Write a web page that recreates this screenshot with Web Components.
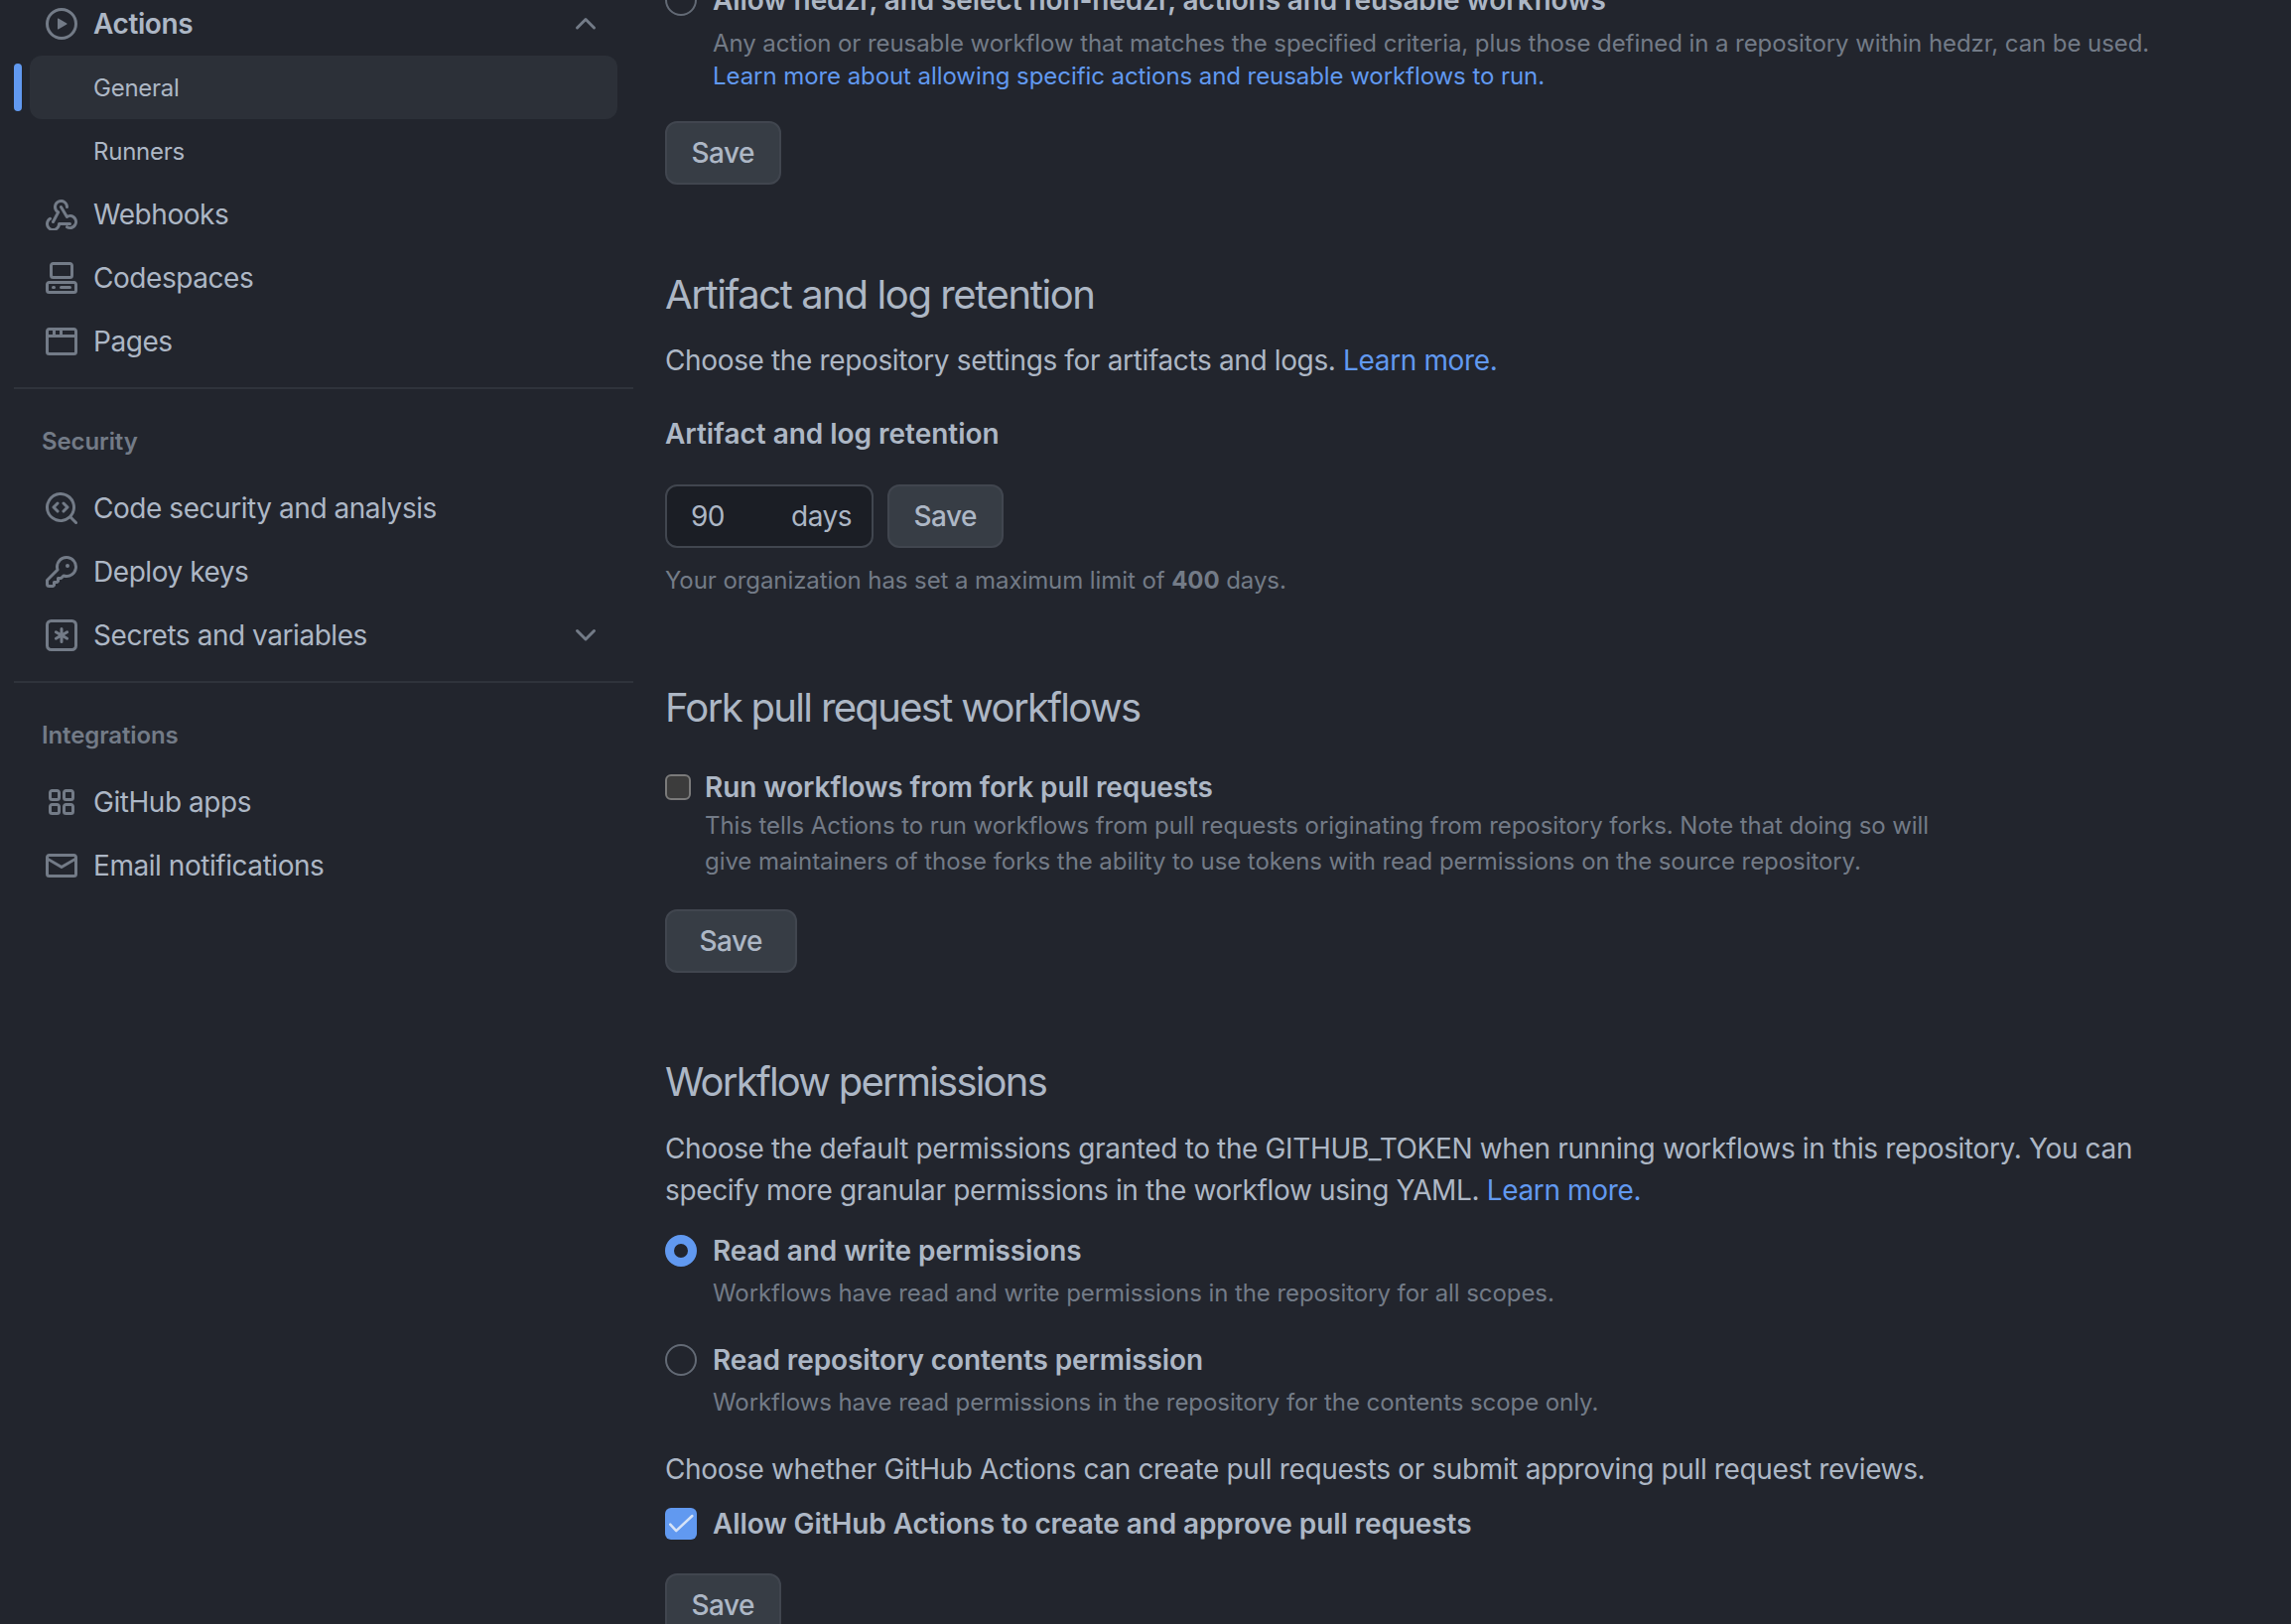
<!DOCTYPE html>
<html lang="en"><head><meta charset="utf-8"><title>Actions settings</title>
<style>
html,body{margin:0;height:1636px;overflow:hidden;background:#22252d}
body{font-family:Inter,"Liberation Sans",sans-serif;color:#adb7c5;font-size:28px;-webkit-font-smoothing:antialiased}
</style></head><body>
<gh-settings>
  <gh-sidebar slot="side">
    <gh-nav icon="play" chev="up" strong>Actions</gh-nav>
    <gh-nav sub selected>General</gh-nav>
    <gh-nav sub>Runners</gh-nav>
    <gh-nav icon="webhook">Webhooks</gh-nav>
    <gh-nav icon="codespaces">Codespaces</gh-nav>
    <gh-nav icon="browser">Pages</gh-nav>
    <gh-nav-head>Security</gh-nav-head>
    <gh-nav icon="codescan">Code security and analysis</gh-nav>
    <gh-nav icon="key">Deploy keys</gh-nav>
    <gh-nav icon="asterisk" chev="down">Secrets and variables</gh-nav>
    <gh-nav-head>Integrations</gh-nav-head>
    <gh-nav icon="apps">GitHub apps</gh-nav>
    <gh-nav icon="mail">Email notifications</gh-nav>
  </gh-sidebar>
  <gh-main slot="main">
    <gh-choice type="radio" style="margin-top:-16px">Allow hedzr, and select non-hedzr, actions and reusable workflows
      <span slot="desc" style="display:block;margin-top:2px;line-height:33px">Any action or reusable workflow that matches the specified criteria, plus those defined in a repository within hedzr, can be used.<br><gh-link>Learn more about allowing specific actions and reusable workflows to run.</gh-link></span>
    </gh-choice>
    <gh-button style="margin-top:29px">Save</gh-button>

    <gh-section heading="Artifact and log retention" style="margin-top:81px;--h:-1.4px">
      <gh-text style="margin-top:15px">Choose the repository settings for artifacts and logs. <gh-link>Learn more.</gh-link></gh-text>
      <gh-text strong style="margin-top:32px">Artifact and log retention</gh-text>
      <gh-retention style="margin-top:30px"></gh-retention>
      <gh-note style="margin-top:15px">Your organization has set a maximum limit of <b>400</b> days.</gh-note>
    </gh-section>

    <gh-section heading="Fork pull request workflows" style="--h:-1.67px">
      <gh-choice type="box" style="margin-top:30px">Run workflows from fork pull requests
        <span slot="desc">This tells Actions to run workflows from pull requests originating from repository forks. Note that doing so will<br>give maintainers of those forks the ability to use tokens with read permissions on the source repository.</span>
      </gh-choice>
      <gh-button wide style="margin-top:30px">Save</gh-button>
    </gh-section>

    <gh-section heading="Workflow permissions" style="--h:-1.78px">
      <gh-text style="margin-top:16px">Choose the default permissions granted to the GITHUB_TOKEN when running workflows in this repository. You can<br>specify more granular permissions in the workflow using YAML. <gh-link>Learn more.</gh-link></gh-text>
      <gh-choice type="radio" checked style="margin-top:24px">Read and write permissions
        <span slot="desc">Workflows have read and write permissions in the repository for all scopes.</span>
      </gh-choice>
      <gh-choice type="radio" style="margin-top:33px">Read repository contents permission
        <span slot="desc">Workflows have read permissions in the repository for the contents scope only.</span>
      </gh-choice>
      <gh-text style="margin-top:28px">Choose whether GitHub Actions can create pull requests or submit approving pull request reviews.</gh-text>
      <gh-choice type="check" checked style="margin-top:18px">Allow GitHub Actions to create and approve pull requests</gh-choice>
      <gh-button style="margin-top:34px">Save</gh-button>
    </gh-section>
  </gh-main>
</gh-settings>
<script>
const ICONS={
play:'<path d="M8 0a8 8 0 1 1 0 16A8 8 0 0 1 8 0ZM1.5 8a6.5 6.5 0 1 0 13 0 6.5 6.5 0 0 0-13 0Zm4.879-2.773 4.264 2.559a.25.25 0 0 1 0 .428l-4.264 2.559A.25.25 0 0 1 6 10.559V5.442a.25.25 0 0 1 .379-.215Z"/>',
webhook:'<path d="M5.5 4.25a2.25 2.25 0 0 1 4.5 0 .75.75 0 0 0 1.5 0 3.75 3.75 0 1 0-6.14 2.889l-2.272 4.258a.75.75 0 0 0 1.324.706L7 7.25a.75.75 0 0 0-.309-1.015A2.25 2.25 0 0 1 5.5 4.25Z"/><path d="M7.364 3.607a.75.75 0 0 1 1.03.257l2.608 4.349a3.75 3.75 0 1 1-.628 6.785.75.75 0 0 1 .752-1.299 2.25 2.25 0 1 0-.033-3.88.75.75 0 0 1-1.03-.256L7.107 4.636a.75.75 0 0 1 .257-1.03Z"/><path d="M2.9 9.776a.75.75 0 0 1-.276 1.025A2.25 2.25 0 1 0 6 12.75a.75.75 0 0 1 .75-.75h5.5a.75.75 0 0 1 0 1.5H7.425A3.751 3.751 0 1 1 1.876 9.5a.75.75 0 0 1 1.024.276Z"/>',
codespaces:'<path d="M0 11.25c0-.966.784-1.75 1.75-1.75h12.5c.966 0 1.75.784 1.75 1.75v3A1.75 1.75 0 0 1 14.25 16H1.75A1.75 1.75 0 0 1 0 14.25Zm2-9.5C2 .784 2.784 0 3.75 0h8.5C13.216 0 14 .784 14 1.75v5a1.75 1.75 0 0 1-1.75 1.75h-8.5A1.75 1.75 0 0 1 2 6.75Zm1.75-.25a.25.25 0 0 0-.25.25v5c0 .138.112.25.25.25h8.5a.25.25 0 0 0 .25-.25v-5a.25.25 0 0 0-.25-.25Zm-2 9.5a.25.25 0 0 0-.25.25v3c0 .138.112.25.25.25h12.5a.25.25 0 0 0 .25-.25v-3a.25.25 0 0 0-.25-.25Z"/><path d="M7 12.75a.75.75 0 0 1 .75-.75h4.5a.75.75 0 0 1 0 1.5h-4.5a.75.75 0 0 1-.75-.75Zm-4 0a.75.75 0 0 1 .75-.75h.5a.75.75 0 0 1 0 1.5h-.5a.75.75 0 0 1-.75-.75Z"/>',
browser:'<path d="M0 2.75C0 1.784.784 1 1.75 1h12.5c.966 0 1.75.784 1.75 1.75v10.5A1.75 1.75 0 0 1 14.25 15H1.75A1.75 1.75 0 0 1 0 13.25ZM14.5 6h-13v7.25c0 .138.112.25.25.25h12.5a.25.25 0 0 0 .25-.25Zm-6-3.5v2h6V2.75a.25.25 0 0 0-.25-.25ZM5 2.5v2h2v-2Zm-3.25 0a.25.25 0 0 0-.25.25V4.5h2v-2Z"/>',
codescan:'<path d="M8.47 4.97a.75.75 0 0 0 0 1.06L9.94 7.5 8.47 8.97a.75.75 0 1 0 1.06 1.06l2-2a.75.75 0 0 0 0-1.06l-2-2a.75.75 0 0 0-1.06 0ZM6.53 6.03a.75.75 0 0 0-1.06-1.06l-2 2a.75.75 0 0 0 0 1.06l2 2a.75.75 0 1 0 1.06-1.06L5.06 7.5l1.47-1.47Z"/><path d="M12.246 13.307a7.501 7.501 0 1 1 1.06-1.06l2.474 2.473a.749.749 0 0 1-.326 1.275.749.749 0 0 1-.734-.215ZM1.5 7.5a6.002 6.002 0 0 0 3.608 5.504 6.002 6.002 0 0 0 6.486-1.117.75.75 0 0 1 .292-.293A6 6 0 1 0 1.5 7.5Z"/>',
key:'<path d="M10.5 0a5.499 5.499 0 1 1-1.288 10.848l-.932.932a.749.749 0 0 1-.53.22H7v.75a.749.749 0 0 1-.22.53l-.5.5a.749.749 0 0 1-.53.22H5v.75a.749.749 0 0 1-.22.53l-.5.5a.749.749 0 0 1-.53.22h-2A1.75 1.75 0 0 1 0 14.25v-2c0-.199.079-.389.22-.53l4.932-4.932A5.5 5.5 0 0 1 10.5 0Zm-4 5.5c-.001.431.069.86.205 1.269a.75.75 0 0 1-.181.768L1.5 12.56v1.69c0 .138.112.25.25.25h1.69l.06-.06v-1.19a.75.75 0 0 1 .75-.75h1.19l.06-.06v-1.19a.75.75 0 0 1 .75-.75h1.19l1.023-1.025a.75.75 0 0 1 .768-.18A4 4 0 1 0 6.5 5.5ZM11 6a1 1 0 1 1 0-2 1 1 0 0 1 0 2Z"/>',
asterisk:'<path d="M0 2.75A2.75 2.75 0 0 1 2.75 0h10.5A2.75 2.75 0 0 1 16 2.75v10.5A2.75 2.75 0 0 1 13.25 16H2.75A2.75 2.75 0 0 1 0 13.25ZM2.75 1.5c-.69 0-1.25.56-1.25 1.25v10.5c0 .69.56 1.25 1.25 1.25h10.5c.69 0 1.25-.56 1.25-1.25V2.75c0-.69-.56-1.25-1.25-1.25Z"/><path d="M8 4a.75.75 0 0 1 .75.75V6.7l1.69-.975a.75.75 0 0 1 .75 1.3L9.5 8l1.69.976a.75.75 0 0 1-.75 1.298L8.75 9.3v1.951a.75.75 0 0 1-1.5 0V9.299l-1.69.976a.75.75 0 0 1-.75-1.3L6.5 8l-1.69-.975a.75.75 0 0 1 .75-1.3l1.69.976V4.75A.75.75 0 0 1 8 4Z"/>',
apps:'<path d="M1.5 3.25c0-.966.784-1.75 1.75-1.75h2.5c.966 0 1.75.784 1.75 1.75v2.5A1.75 1.75 0 0 1 5.75 7.5h-2.5A1.75 1.75 0 0 1 1.5 5.75Zm7 0c0-.966.784-1.75 1.75-1.75h2.5c.966 0 1.75.784 1.75 1.75v2.5a1.75 1.75 0 0 1-1.75 1.75h-2.5A1.75 1.75 0 0 1 8.5 5.75Zm-7 7c0-.966.784-1.75 1.75-1.75h2.5c.966 0 1.75.784 1.75 1.75v2.5a1.75 1.75 0 0 1-1.75 1.75h-2.5a1.75 1.75 0 0 1-1.75-1.75Zm7 0c0-.966.784-1.75 1.75-1.75h2.5c.966 0 1.75.784 1.75 1.75v2.5a1.75 1.75 0 0 1-1.75 1.75h-2.5a1.75 1.75 0 0 1-1.75-1.75ZM3.25 3a.25.25 0 0 0-.25.25v2.5c0 .138.112.25.25.25h2.5A.25.25 0 0 0 6 5.75v-2.5A.25.25 0 0 0 5.75 3Zm7 0a.25.25 0 0 0-.25.25v2.5c0 .138.112.25.25.25h2.5a.25.25 0 0 0 .25-.25v-2.5a.25.25 0 0 0-.25-.25Zm-7 7a.25.25 0 0 0-.25.25v2.5c0 .138.112.25.25.25h2.5a.25.25 0 0 0 .25-.25v-2.5a.25.25 0 0 0-.25-.25Zm7 0a.25.25 0 0 0-.25.25v2.5c0 .138.112.25.25.25h2.5a.25.25 0 0 0 .25-.25v-2.5a.25.25 0 0 0-.25-.25Z"/>',
mail:'<path d="M1.75 2h12.5c.966 0 1.75.784 1.75 1.75v8.5A1.75 1.75 0 0 1 14.25 14H1.75A1.75 1.75 0 0 1 0 12.25v-8.5C0 2.784.784 2 1.75 2ZM1.5 12.251c0 .138.112.25.25.25h12.5a.25.25 0 0 0 .25-.25V5.809L8.38 9.397a.75.75 0 0 1-.76 0L1.5 5.809v6.442Zm13-8.181v-.32a.25.25 0 0 0-.25-.25H1.75a.25.25 0 0 0-.25.25v.32L8 7.88Z"/>',
up:'<path d="M3.22 10.53a.749.749 0 0 1 0-1.06l4.25-4.25a.749.749 0 0 1 1.06 0l4.25 4.25a.749.749 0 1 1-1.06 1.06L8 6.811 4.28 10.53a.749.749 0 0 1-1.06 0Z"/>',
down:'<path d="M12.78 5.22a.749.749 0 0 1 0 1.06l-4.25 4.25a.749.749 0 0 1-1.06 0L3.22 6.28a.749.749 0 1 1 1.06-1.06L8 8.939l3.72-3.719a.749.749 0 0 1 1.06 0Z"/>'
};
const svg=n=>`<svg width="32" height="32" viewBox="0 0 16 16" fill="#737b87" aria-hidden="true">${ICONS[n]}</svg>`;
function el(name,css,html){
  customElements.define(name,class extends HTMLElement{
    constructor(){super();this.attachShadow({mode:'open'});}
    connectedCallback(){const h=typeof html==='function'?html(this):html;this.shadowRoot.innerHTML=`<style>${css}</style>${h}`;}
  });
}
el('gh-settings',`:host{display:flex;align-items:flex-start;height:1636px;overflow:hidden}
  .s{flex:0 0 624px;margin-left:14px}.m{flex:0 0 1540px;margin-left:32px}`,
  `<div class="s"><slot name="side"></slot></div><div class="m"><slot name="main"></slot></div>`);
el('gh-sidebar',`:host{display:block;margin-top:-8px}`,`<slot></slot>`);
el('gh-nav',`:host{display:flex;align-items:center;position:relative;height:64px;margin:0 16px;padding:0 16px;box-sizing:border-box;width:592px;border-radius:12px;font-size:28px;color:#adb7c5;letter-spacing:var(--ls,-.45px)}
  :host([sub]){font-size:24px;--ls:-.25px}
  :host([strong]){font-weight:600;--ls:-.4px}
  :host([selected]){background:#2c3038}
  :host([selected])::before{content:"";position:absolute;left:-16px;top:8px;width:8px;height:48px;border-radius:8px;background:#6199f0}
  .i{width:32px;height:32px;margin-right:16px;flex:none;display:block}
  svg{display:block}
  .t{flex:1}.c{flex:none;width:32px;height:32px}`,
  t=>`<span class="i">${t.hasAttribute('icon')?svg(t.getAttribute('icon')):''}</span><span class="t"><slot></slot></span>${t.hasAttribute('chev')?`<span class="c">${svg(t.getAttribute('chev'))}</span>`:''}`);
el('gh-nav-head',`:host{display:block;width:624px;box-sizing:border-box;margin:14px 0 0;border-top:2px solid #2f333b;padding:35px 0 17px 28px;font-size:24px;line-height:36px;font-weight:600;color:#737b87;letter-spacing:-.12px}`,`<slot></slot>`);
el('gh-main',`:host{display:block}`,`<slot></slot>`);
el('gh-section',`:host{display:block;margin-top:80px}
  h2{margin:0;font-size:40px;line-height:60px;font-weight:400;color:#adb7c5;letter-spacing:var(--h,-1.5px)}`,
  t=>`<h2>${t.getAttribute('heading')}</h2><slot></slot>`);
el('gh-text',`:host{display:block;font-size:28px;line-height:42px;color:#adb7c5;letter-spacing:-.36px}:host([strong]){font-weight:600;letter-spacing:-.03px}`,`<slot></slot>`);
el('gh-link',`:host{color:#6199f0}`,`<slot></slot>`);
el('gh-note',`:host{display:block;font-size:24px;line-height:36px;color:#737b87;letter-spacing:-.08px}`,`<slot></slot>`);
el('gh-button',`:host{display:table;box-sizing:border-box;height:64px;padding:0 24.5px;border:2px solid #41464f;border-radius:12px;background:#373d45;color:#adb7c5;font-size:28px;font-weight:500;line-height:60px;letter-spacing:-.5px}
  :host([wide]){padding:0 32.5px}`,`<slot></slot>`);
el('gh-retention',`:host{display:flex;gap:14px}
  .b{display:flex;justify-content:space-between;width:210px;height:64px;box-sizing:border-box;padding:0 20px 0 24px;border:2px solid #41464f;border-radius:12px;background:#1b1e25;line-height:60px;font-size:28px;letter-spacing:-.5px}`,
  `<div class="b"><span>90</span><span>days</span></div><gh-button>Save</gh-button>`);
el('gh-choice',`:host{display:grid;column-gap:var(--g,16px);row-gap:9px;align-items:center}
  :host([type=radio]),:host([type=check]){grid-template-columns:32px 1fr}
  :host([type=box]){grid-template-columns:26px 1fr;--g:14px;row-gap:1px}
  :host([type=box]) .l{line-height:40px}
  .m{box-sizing:border-box;width:32px;height:32px;border-radius:50%;border:2px solid #636a75;background:transparent}
  .m.on{border:9px solid #6199f0;background:#22252d}
  .m.box{width:26px;height:26px;border-radius:6px;border:2px solid #7a7a7a;background:#3c3c3c}
  .m.chk{border:0;border-radius:6px;background:#6199f0;display:block}
  .l{font-size:28px;font-weight:600;line-height:32px;color:#adb7c5;letter-spacing:-.1px}
  .d{grid-column:2;font-size:24px;line-height:36px;color:#737b87;letter-spacing:-.07px}`,
  t=>{const ty=t.getAttribute('type'),c=t.hasAttribute('checked');
    let m;
    if(ty==='radio')m=`<span class="m ${c?'on':''}"></span>`;
    else if(ty==='box')m=`<span class="m box"></span>`;
    else m=`<span class="m chk"><svg width="32" height="32" viewBox="0 0 16 16" style="display:block" fill="none" stroke="#d6e3f7" stroke-width="1.25" stroke-linecap="round" stroke-linejoin="round"><path d="M2.6 8.3 5.6 11.6 13.7 4"/></svg></span>`;
    const hasDesc=t.querySelector('[slot=desc]');
    return `${m}<span class="l"><slot></slot></span>${hasDesc?'<span class="d"><slot name="desc"></slot></span>':''}`;});
</script>
</body></html>
